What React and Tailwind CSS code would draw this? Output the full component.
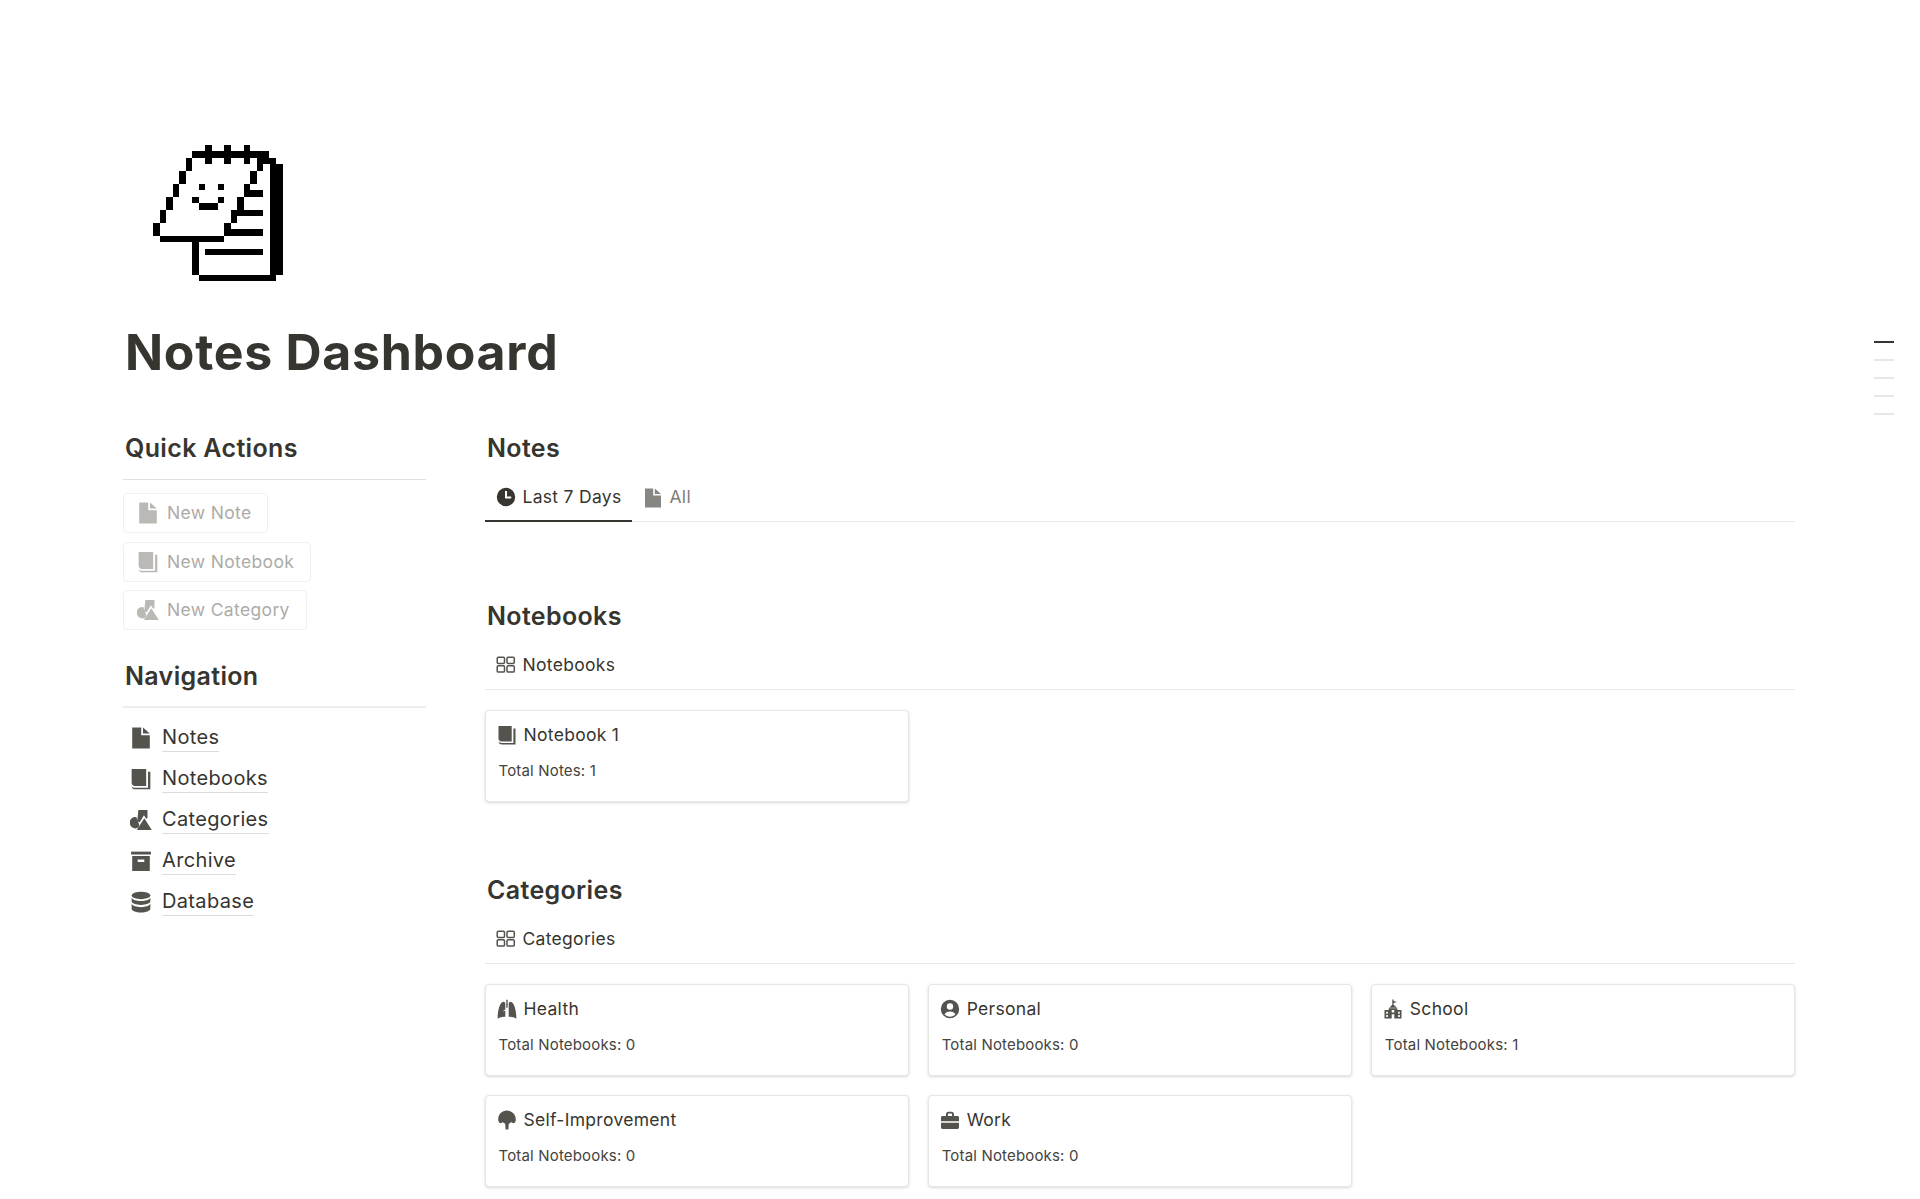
const pixels = [
  // ticks and top edge
  [8, 0, 1, 3], [11, 0, 1, 3], [14, 0, 1, 3], [6, 1, 11.9, 1],
  // left diagonal
  [5, 2, 1, 2], [4, 4, 1, 2], [3, 6, 1, 2], [2, 8, 1, 2], [1, 10, 1, 2], [0, 12, 1, 2], [1, 14, 10, 1],
  // right diagonal with the text lines
  [16, 2, 3, 1], [16, 3, 1, 1], [15, 4, 1, 2], [14, 6, 1, 2], [14, 7, 3, 1], [13, 8, 1, 2], [12, 10, 5, 1],
  [12, 11, 1, 1], [11, 12, 1, 2], [11, 13, 6, 1], [8, 16, 9, 1],
  // back sheet
  [6, 15, 1, 5], [7, 20, 12, 1], [18, 3, 2, 17],
  // face
  [7, 6, 1, 1], [10, 6, 1, 1], [6, 8, 1, 1], [10, 8, 1, 1], [7, 9, 3, 1],
];

const NotepadLogo = () => (
  <svg width="130" height="136" viewBox="0 0 20 21" shapeRendering="crispEdges">
    {pixels.map(([x, y, w, h], i) => (
      <rect key={i} x={x} y={y} width={w} height={h} fill="#000" />
    ))}
  </svg>
);

const Svg = ({ className, children }) => (
  <svg viewBox="0 0 20 20" fill="currentColor" className={className}>
    {children}
  </svg>
);

const DocIcon = ({ className }) => (
  <Svg className={className}>
    <path d="M2 0.5h8.2V7.6H18v11.9H2z" />
    <path d="M11.8 0.5L18 6H11.8z" />
  </Svg>
);

const NotebookIcon = ({ className }) => (
  <Svg className={className}>
    <path d="M1.5 1h13.2v15.4H4.4c-1.7 0-2.9-1.2-2.9-2.9z" />
    <path d="M16.4 3.4h2.1v16H5.1c-2 0-3.3-.9-3.6-2.6 .7 .7 1.7 1.1 2.9 1.1h12z" />
  </Svg>
);

const ShapesIcon = ({ className }) => (
  <Svg className={className}>
    <path d="M7.600 .8h8.300v7.400l-1.200 .6-2-3.200-3.900 6.500-2.200-.9z" />
    <path d="M5.700 7.300l2.800 7.300-.8 1.300h1.100a5.200 5.200 0 1 1-3.100-8.600z" />
    <path d="M13 8.400l6.800 10.700H6.200z" />
  </Svg>
);

const ArchiveIcon = ({ className }) => (
  <Svg className={className}>
    <rect x="1" y="1.5" width="18" height="2.6" />
    <path fillRule="evenodd" d="M2 5.500h16v13.500H2zM7 8.600v2.200h6V8.600z" />
  </Svg>
);

const DatabaseIcon = ({ className }) => (
  <Svg className={className}>
    <ellipse cx="10" cy="4" rx="8.500" ry="3.400" />
    <path d="M1.500 6.200c1 2 4.400 3 8.500 3s7.500-1 8.500-3v3.200c0 1.900-3.800 3.300-8.500 3.300s-8.500-1.400-8.500-3.300z" />
    <path d="M1.500 11.700c1 2 4.400 3 8.500 3s7.500-1 8.500-3v4.500c0 1.900-3.800 3.400-8.500 3.400s-8.500-1.500-8.500-3.400z" />
  </Svg>
);

const ClockIcon = ({ className }) => (
  <Svg className={className}>
    <path
      fillRule="evenodd"
      d="M10 .8a9.200 9.200 0 1 1 0 18.400a9.200 9.200 0 0 1 0-18.400zM9 4v7.400h6.200V9.400H11V4z"
    />
  </Svg>
);

const GridIcon = ({ className }) => (
  <svg viewBox="0 0 20 20" fill="none" stroke="currentColor" strokeWidth="1.5" className={className}>
    <rect x="1.200" y="2.200" width="7.300" height="6.300" rx="1.200" />
    <rect x="11" y="2.200" width="7.300" height="6.300" rx="1.200" />
    <rect x="1.200" y="10.800" width="7.300" height="6.300" rx="1.200" />
    <rect x="11" y="10.800" width="7.300" height="6.300" rx="1.200" />
  </svg>
);

const LungsIcon = ({ className }) => (
  <Svg className={className}>
    <path d="M9.300 .8h1.400v7.400l-1.400 1z" />
    <path d="M6.300 2.800c1.200 0 2 .9 2 2.200v5.400L5.500 12.400l2.800-.6v6.100c-2.700-.2-5.300 .6-7.600 1.800C.3 13.200 2.800 2.800 6.300 2.800z" />
    <path d="M13.700 2.800c-1.200 0-2 .9-2 2.200v12.900c2.700-.2 5.300 .6 7.600 1.800C19.700 13.200 17.200 2.800 13.700 2.800z" />
  </Svg>
);

const PersonIcon = ({ className }) => (
  <Svg className={className}>
    <path
      fillRule="evenodd"
      d="M10 .8a9.200 9.200 0 1 1 0 18.400a9.200 9.200 0 0 1 0-18.400zM10 4.300a3.200 3.200 0 1 0 0 6.400a3.200 3.200 0 0 0 0-6.400zM4.500 15.300c1.300 1.600 3.300 2.500 5.500 2.500s4.200-.9 5.500-2.500c-.9-1.700-3-2.900-5.500-2.900s-4.600 1.200-5.500 2.900z"
    />
  </Svg>
);

const SchoolIcon = ({ className }) => (
  <Svg className={className}>
    <path d="M9.300 .5h1.300v1.500l3.400 1-3.400 1v1.700l3.500 3.100H6.200l3.100-3.100z" />
    <path
      fillRule="evenodd"
      d="M5.700 9.200h8.600v1.800h4.200V19.500H1.500V11h4.200zM8.700 11v2.500h2.600V11zM3.200 12.800v2h1.700v-2zM15.100 12.800v2h1.700v-2zM3.200 16v2h1.700v-2zM15.100 16v2h1.700v-2zM8.700 15.300v4.200h2.600v-4.200z"
    />
  </Svg>
);

const TreeIcon = ({ className }) => (
  <Svg className={className}>
    <path d="M10 .6c5 0 8.800 3.900 8.800 8.600 0 2.100-.7 3.500-1.800 3.900-1.100 .4-2.100-.2-3-1-.4 1.100-1.200 1.600-2.200 1.300L11.400 19.500H8.600L8.200 13.400c-1 .3-1.800-.2-2.200-1.300-.9 .8-1.900 1.400-3 1-1.100-.4-1.800-1.800-1.800-3.900C1.200 4.500 5 .6 10 .6z" />
  </Svg>
);

const BriefcaseIcon = ({ className }) => (
  <Svg className={className}>
    <path
      fillRule="evenodd"
      d="M6 6V4.200C6 2.700 7 1.800 8.400 1.800h3.200C13 1.800 14 2.700 14 4.200V6h3.300c1.100 0 1.700.7 1.700 1.700v3.600H1V7.700C1 6.700 1.600 6 2.700 6zM7.900 6h4.200V4.400c0-.5-.3-.8-.7-.8H8.600c-.4 0-.7.3-.7.8z"
    />
    <path d="M1 12.700h18v4.500c0 1-.7 1.800-1.800 1.800H2.800c-1.100 0-1.800-.8-1.800-1.800z" />
  </Svg>
);

const quickActions = [
  { label: 'New Note', icon: DocIcon, width: 'w-[145px]' },
  { label: 'New Notebook', icon: NotebookIcon, width: 'w-[188px]' },
  { label: 'New Category', icon: ShapesIcon, width: 'w-[184px]' },
];

const navLinks = [
  { label: 'Notes', icon: DocIcon },
  { label: 'Notebooks', icon: NotebookIcon },
  { label: 'Categories', icon: ShapesIcon },
  { label: 'Archive', icon: ArchiveIcon },
  { label: 'Database', icon: DatabaseIcon },
];

const categories = [
  { title: 'Health', icon: LungsIcon, count: 'Total Notebooks: 0' },
  { title: 'Personal', icon: PersonIcon, count: 'Total Notebooks: 0' },
  { title: 'School', icon: SchoolIcon, count: 'Total Notebooks: 1' },
  { title: 'Self-Improvement', icon: TreeIcon, count: 'Total Notebooks: 0' },
  { title: 'Work', icon: BriefcaseIcon, count: 'Total Notebooks: 0' },
];

const Heading = ({ children, className = '' }) => (
  <h2 className={`h-[36px] text-[25px] leading-[36px] font-semibold tracking-[0.35px] text-[#37352f] ${className}`}>
    {children}
  </h2>
);

const Card = ({ title, icon: Icon, count }) => (
  <div className="h-[92px] rounded-[4px] border border-[#e6e6e4] bg-white px-[11px] pt-[12px] shadow-[0_1px_3px_rgba(15,15,15,0.16)]">
    <div className="flex h-[24px] items-center gap-[7px]">
      <Icon className="h-[20px] w-[20px] text-[#55534e]" />
      <span className="text-[17.5px] tracking-[0.3px] text-[#37352f]">{title}</span>
    </div>
    <p className="mt-[12px] pl-[2px] text-[15px] leading-[24px] tracking-[0.17px] text-[#45433e]">{count}</p>
  </div>
);

const ViewTab = ({ label }) => (
  <div className="mt-[6px] flex h-[50px] items-center gap-[7px] border-b border-[#e8e8e6] pl-[11px]">
    <GridIcon className="h-[20px] w-[20px] text-[#55534e]" />
    <span className="pt-[1px] text-[17.5px] tracking-[0.3px] text-[#37352f]">{label}</span>
  </div>
);

export default function App() {
  return (
    <div className="relative h-[1199px] overflow-hidden bg-white pt-[145px] pr-[125px] pl-[123px] font-['Inter',sans-serif]">
      <div className="pl-[30px]">
        <NotepadLogo />
      </div>
      <h1 className="mt-[41px] h-[60px] pl-[2px] text-[50px] leading-[60px] font-bold tracking-[0.7px] text-[#37352f]">
        Notes Dashboard
      </h1>

      <div className="mt-[48px] flex gap-[58.500px]">
        <aside className="w-[303px] shrink-0">
          <Heading className="pl-[2px]">Quick Actions</Heading>
          <div className="mt-[13px] border-t border-[#e0e0de]" />
          <div className="mt-[13px] flex flex-col gap-[8.500px]">
            {quickActions.map(({ label, icon: Icon, width }) => (
              <div
                key={label}
                className={`flex h-[40px] items-center gap-[8px] rounded-[4px] border border-[#f0f0ee] pl-[13px] ${width}`}
              >
                <Icon className="h-[22px] w-[22px] text-[#bab9b5]" />
                <span className="pt-[1px] text-[17.5px] tracking-[0.35px] text-[#adaba7]">{label}</span>
              </div>
            ))}
          </div>

          <Heading className="mt-[28px] pl-[2px]">Navigation</Heading>
          <div className="mt-[12px] border-t-2 border-[#ededeb]" />
          <nav className="mt-[9px]">
            {navLinks.map(({ label, icon: Icon }) => (
              <div key={label} className="flex h-[41px] items-center gap-[10px] pl-[7px]">
                <Icon className="h-[22px] w-[22px] text-[#55534e]" />
                <span className="border-b border-[#dcdcda] text-[20px] leading-[27px] tracking-[0.35px] text-[#37352f]">
                  {label}
                </span>
              </div>
            ))}
          </nav>
        </aside>

        <main className="min-w-0 flex-1">
          <Heading className="pl-[2.500px]">Notes</Heading>
          <div className="mt-[10px] flex h-[46px] border-b border-[#e8e8e6]">
            <div className="flex h-[46px] w-[147px] items-center gap-[7px] border-b-2 border-[#37352f] pb-[2px] pl-[11px]">
              <ClockIcon className="h-[20px] w-[20px] text-[#37352f]" />
              <span className="text-[17.5px] tracking-[0.3px] text-[#37352f]">Last 7 Days</span>
            </div>
            <div className="flex items-center gap-[7px] pb-[2px] pl-[11px]">
              <DocIcon className="h-[20px] w-[20px] text-[#878682]" />
              <span className="text-[17.5px] tracking-[0.3px] text-[#7d7c78]">All</span>
            </div>
          </div>

          <Heading className="mt-[76px] pl-[2.500px]">Notebooks</Heading>
          <ViewTab label="Notebooks" />
          <div className="mt-[20px] grid grid-cols-3 gap-[19px]">
            <Card title="Notebook 1" icon={NotebookIcon} count="Total Notes: 1" />
          </div>

          <Heading className="mt-[70px] pl-[2.500px]">Categories</Heading>
          <ViewTab label="Categories" />
          <div className="mt-[20px] grid grid-cols-3 gap-[19px]">
            {categories.map((category) => (
              <Card key={category.title} {...category} />
            ))}
          </div>
        </main>
      </div>

      {/* page outline markers, floating over the right edge */}
      <div className="absolute top-[341px] right-[26px] flex w-[20px] flex-col gap-[16px]">
        <div className="h-[2px] bg-[#37352f]" />
        <div className="h-[2px] bg-[#e6e6e4]" />
        <div className="h-[2px] bg-[#e6e6e4]" />
        <div className="h-[2px] bg-[#e6e6e4]" />
        <div className="h-[2px] bg-[#e6e6e4]" />
      </div>
    </div>
  );
}
